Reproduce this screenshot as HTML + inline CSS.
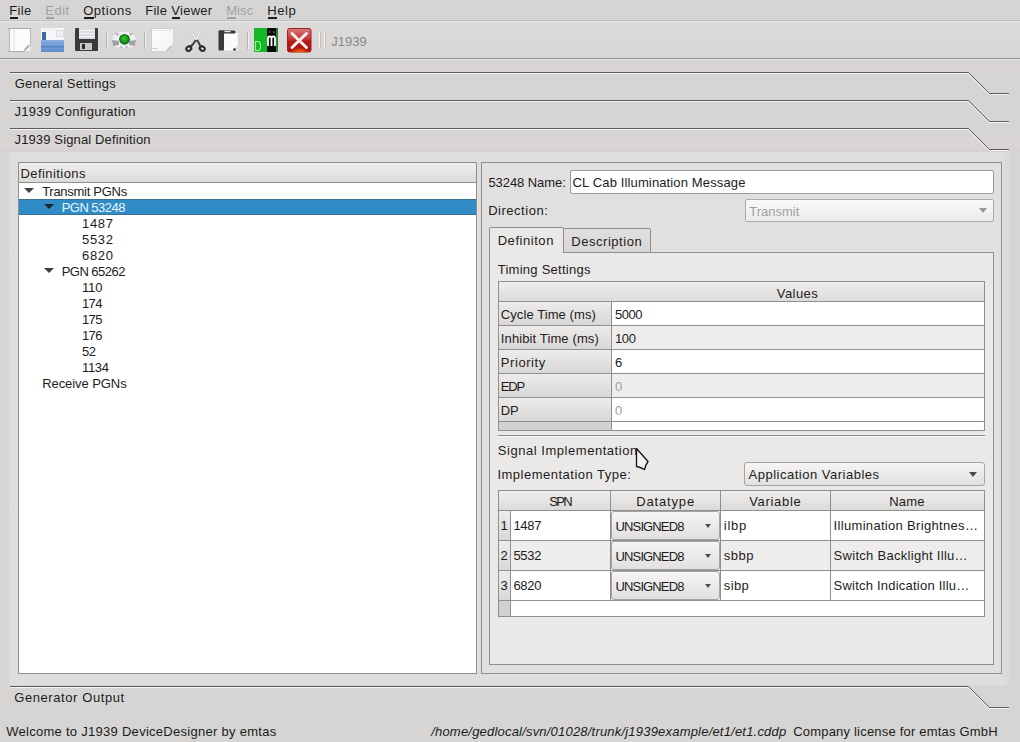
<!DOCTYPE html>
<html><head><meta charset="utf-8">
<style>
*{box-sizing:border-box;margin:0;padding:0}
html,body{width:1020px;height:742px;overflow:hidden;background:#d6d5d3;font-family:"Liberation Sans",sans-serif;font-size:13px;color:#1c1c1c;position:relative}
.a{position:absolute}
.t{position:absolute;white-space:pre;line-height:15px}
.hd{background:linear-gradient(#f0eeec,#dddbd9)}
.vh{background:linear-gradient(#eeecea,#dad8d6)}
.cb{background:linear-gradient(#f6f5f4,#e2e0de);border:1px solid #a6a4a2;border-radius:3px}
.arr{position:absolute;width:0;height:0;border-left:5px solid transparent;border-right:5px solid transparent;border-top:5px solid #3c3c3c}
</style></head><body>
<!-- menu bar -->
<div class="a" style="left:0;top:20px;width:1020px;height:1px;background:#c4c3c1"></div>
<div class="a" style="left:0;top:21px;width:1020px;height:1px;background:#e6e5e4"></div>
<div class="a" style="left:0;top:22px;width:1020px;height:36px;background:linear-gradient(#dcdbda,#d7d6d5)"></div>
<!-- underline accelerators -->
<div class="a" style="left:10px;top:17px;width:8px;height:2px;background:#1c1c1c"></div>
<div class="a" style="left:46px;top:17px;width:8px;height:2px;background:#a3a19f"></div>
<div class="a" style="left:84px;top:17px;width:10px;height:2px;background:#1c1c1c"></div>
<div class="a" style="left:172px;top:17px;width:8px;height:2px;background:#1c1c1c"></div>
<div class="a" style="left:227px;top:17px;width:9px;height:2px;background:#a3a19f"></div>
<div class="a" style="left:268px;top:17px;width:9px;height:2px;background:#1c1c1c"></div>
<!-- toolbar bottom -->
<div class="a" style="left:0;top:58px;width:1020px;height:1px;background:#918f8d"></div>
<div class="a" style="left:0;top:59px;width:1020px;height:1px;background:#e8e7e6"></div>
<div class="a" style="left:0;top:64px;width:1020px;height:8px;background:#d9d5d4"></div>
<div class="a" style="left:0;top:136px;width:1020px;height:12px;background:#d9d5d4"></div>
<div class="a" style="left:0;top:148px;width:1020px;height:4px;background:#d4d3d2"></div>

<!-- toolbox tab lines -->
<svg class="a" style="left:0;top:0" width="1020" height="742">
<g fill="none" stroke-width="1">
<path d="M10 73.5 H968 L989 94.5 H1009" stroke="#f6f4f2"/>
<path d="M10 72.5 H968.5 L989.5 93.5 H1009" stroke="#5e5c5a"/>
<path d="M10 101.5 H968 L989 122.5 H1009" stroke="#f6f4f2"/>
<path d="M10 100.5 H968.5 L989.5 121.5 H1009" stroke="#5e5c5a"/>
<path d="M10 129.5 H968 L989 150.5 H1009" stroke="#f6f4f2"/>
<path d="M10 128.5 H968.5 L989.5 149.5 H1009" stroke="#5e5c5a"/>
<path d="M10 687.5 H968 L989 708.5 H1009" stroke="#f6f4f2"/>
<path d="M10 686.5 H968.5 L989.5 707.5 H1009" stroke="#5e5c5a"/>
</g></svg>

<!-- page -->
<div class="a" style="left:9px;top:152px;width:1001px;height:533px;background:linear-gradient(90deg,#dddcdb 0px,#dfdedd 9px,#dfdedd 993px,#d9d8d7 1001px)"></div>

<!-- left tree -->
<div class="a" style="left:18px;top:162px;width:459px;height:512px;background:#fff;border:1px solid #918f8d"></div>
<div class="a hd" style="left:19px;top:163px;width:457px;height:19px"></div>
<div class="a" style="left:19px;top:182px;width:457px;height:1px;background:#918f8d"></div>
<div class="a" style="left:19px;top:199px;width:457px;height:16px;background:#308cc6;border-top:1px solid #3a7090;border-bottom:1px solid #3a7090"></div>
<div class="arr" style="left:24px;top:188px;border-top-color:#404040"></div>
<div class="arr" style="left:44px;top:204px;border-top-color:#1a2530"></div>
<div class="arr" style="left:44px;top:268px;border-top-color:#404040"></div>

<!-- right panel -->
<div class="a" style="left:481px;top:162px;width:521px;height:512px;background:#e2e0de;border:1px solid #918f8d"></div>
<!-- name input -->
<div class="a" style="left:570px;top:170px;width:424px;height:24px;background:#fff;border:1px solid #9c9a98;border-radius:2px"></div>
<!-- direction combo (disabled) -->
<div class="a" style="left:745px;top:199px;width:249px;height:23px;background:linear-gradient(#fbfafa,#ecebea);border:1px solid #acaaa8;border-radius:2px"></div>
<div class="arr" style="left:979px;top:208px;border-left-width:4px;border-right-width:4px;border-top-width:5px;border-top-color:#9a9896"></div>

<!-- tabs -->
<div class="a" style="left:563px;top:228px;width:88px;height:25px;background:linear-gradient(#e2e0de,#d8d6d4);border:1px solid #918f8d;border-radius:2px 2px 0 0"></div>
<div class="a" style="left:489px;top:252px;width:505px;height:413px;background:#ebe9e7;border:1px solid #918f8d"></div>
<div class="a" style="left:489px;top:227px;width:75px;height:26px;background:#ebe9e7;border:1px solid #918f8d;border-bottom:none;border-radius:2px 2px 0 0"></div>

<!-- table 1 -->
<div class="a" style="left:498px;top:281px;width:487px;height:150px;background:#fff;border:1px solid #918f8d"></div>
<div class="a hd" style="left:499px;top:282px;width:485px;height:19px"></div>
<div class="a" style="left:499px;top:301px;width:485px;height:1px;background:#918f8d"></div>
<div class="a" style="left:612px;top:326px;width:372px;height:23px;background:#efedeb"></div>
<div class="a" style="left:612px;top:374px;width:372px;height:23px;background:#efedeb"></div>
<div class="a vh" style="left:499px;top:302px;width:112px;height:23px"></div>
<div class="a vh" style="left:499px;top:326px;width:112px;height:23px"></div>
<div class="a vh" style="left:499px;top:350px;width:112px;height:23px"></div>
<div class="a vh" style="left:499px;top:374px;width:112px;height:23px"></div>
<div class="a vh" style="left:499px;top:398px;width:112px;height:23px"></div>
<div class="a" style="left:499px;top:422px;width:112px;height:8px;background:#d4d2d0"></div>
<div class="a" style="left:611px;top:302px;width:1px;height:128px;background:#918f8d"></div>
<div class="a" style="left:499px;top:325px;width:485px;height:1px;background:#918f8d"></div>
<div class="a" style="left:499px;top:349px;width:485px;height:1px;background:#918f8d"></div>
<div class="a" style="left:499px;top:373px;width:485px;height:1px;background:#918f8d"></div>
<div class="a" style="left:499px;top:397px;width:485px;height:1px;background:#918f8d"></div>
<div class="a" style="left:499px;top:421px;width:485px;height:1px;background:#918f8d"></div>

<!-- separator -->
<div class="a" style="left:498px;top:435px;width:487px;height:1px;background:#8e8c8a"></div>
<div class="a" style="left:498px;top:436px;width:487px;height:1px;background:#fbfaf9"></div>

<!-- app variables combo -->
<div class="a cb" style="left:744px;top:462px;width:241px;height:24px"></div>
<div class="arr" style="left:969px;top:472px;border-left-width:4.5px;border-right-width:4.5px;border-top-color:#4a4a4a"></div>

<!-- table 2 -->
<div class="a" style="left:498px;top:490px;width:487px;height:127px;background:#fff;border:1px solid #918f8d"></div>
<div class="a hd" style="left:499px;top:491px;width:485px;height:19px"></div>
<div class="a" style="left:499px;top:510px;width:485px;height:1px;background:#918f8d"></div>
<div class="a" style="left:511px;top:541px;width:473px;height:29px;background:#efedeb"></div>
<div class="a vh" style="left:499px;top:511px;width:11px;height:29px"></div>
<div class="a vh" style="left:499px;top:541px;width:11px;height:29px"></div>
<div class="a vh" style="left:499px;top:571px;width:11px;height:29px"></div>
<div class="a" style="left:499px;top:601px;width:11px;height:15px;background:#d4d2d0"></div>
<div class="a" style="left:510px;top:511px;width:1px;height:105px;background:#918f8d"></div>
<div class="a" style="left:610px;top:491px;width:1px;height:110px;background:#918f8d"></div>
<div class="a" style="left:720px;top:491px;width:1px;height:110px;background:#918f8d"></div>
<div class="a" style="left:830px;top:491px;width:1px;height:110px;background:#918f8d"></div>
<div class="a" style="left:499px;top:540px;width:485px;height:1px;background:#918f8d"></div>
<div class="a" style="left:499px;top:570px;width:485px;height:1px;background:#918f8d"></div>
<div class="a" style="left:499px;top:600px;width:485px;height:1px;background:#918f8d"></div>
<!-- datatype combos -->
<div class="a cb" style="left:611px;top:511px;width:109px;height:29px"></div>
<div class="a cb" style="left:611px;top:541px;width:109px;height:29px"></div>
<div class="a cb" style="left:611px;top:571px;width:109px;height:29px"></div>
<div class="arr" style="left:705px;top:524px;border-left-width:3.5px;border-right-width:3.5px;border-top-width:4px;border-top-color:#4e4e4e"></div>
<div class="arr" style="left:705px;top:554px;border-left-width:3.5px;border-right-width:3.5px;border-top-width:4px;border-top-color:#4e4e4e"></div>
<div class="arr" style="left:705px;top:584px;border-left-width:3.5px;border-right-width:3.5px;border-top-width:4px;border-top-color:#4e4e4e"></div>

<svg class="a" style="left:630px;top:444px" width="24" height="30">
<path d="M6.5 4.5 L6.5 22.5 Q10 23 14.5 25.5 Q15.5 21 18 17.5 Z" fill="#f2f2f2" stroke="#111" stroke-width="1.3" stroke-linejoin="round"/>
</svg>
<!-- icons -->
<svg class="a" style="left:0;top:20px" width="380" height="38">
<defs>
<linearGradient id="pg" x1="0" y1="0" x2="1" y2="1"><stop offset="0" stop-color="#ffffff"/><stop offset="1" stop-color="#f0f0f2"/></linearGradient>
<linearGradient id="rx" x1="0" y1="0" x2="0" y2="1"><stop offset="0" stop-color="#d87a7a"/><stop offset="0.45" stop-color="#c43434"/><stop offset="0.55" stop-color="#b81818"/><stop offset="1" stop-color="#a81010"/></linearGradient>
<radialGradient id="ro" cx="0.5" cy="1" r="0.45"><stop offset="0" stop-color="#ff6a00"/><stop offset="1" stop-color="#ff6a00" stop-opacity="0"/></radialGradient>
<radialGradient id="gr" cx="0.45" cy="0.4" r="0.6"><stop offset="0" stop-color="#2ed02e"/><stop offset="1" stop-color="#0c7a12"/></radialGradient>
<linearGradient id="bl" x1="0" y1="0" x2="0" y2="1"><stop offset="0" stop-color="#86aee0"/><stop offset="0.5" stop-color="#6f9ad4"/><stop offset="0.55" stop-color="#4f7fc2"/><stop offset="0.7" stop-color="#6e9ad6"/><stop offset="1" stop-color="#5a88c8"/></linearGradient>
</defs>
<g transform="translate(0,-20)">
<!-- new document: x 9-31, y 28-51 -->
<rect x="9" y="28" width="22" height="24" fill="#fbfbfc"/>
<rect x="13" y="30" width="2" height="20" fill="#eef0f8"/>
<rect x="8" y="28" width="23" height="1" fill="#a9a9a9"/>
<rect x="9" y="29" width="1" height="22" fill="#b8b8b8"/>
<rect x="30" y="29" width="1" height="16" fill="#b8b8b8"/>
<rect x="8" y="51" width="16" height="1" fill="#a9a9a9"/>
<path d="M23 52 L31 44 L31 52 Z" fill="#d9d8d7"/>
<path d="M23.5 51.5 Q25 46 30.5 44.5 Q28 48 24.5 51.5Z" fill="#a8a8a8"/>
<path d="M25 51 Q27.5 48 30.5 46.5 L30.5 51 Z" fill="#f2f2f2"/>

<!-- open: x 41-64, y 28-52 -->
<rect x="41" y="28" width="23" height="12" fill="#f4f6f8"/>
<rect x="43" y="29" width="11" height="1" fill="#e8eaee"/>
<rect x="56" y="30" width="8" height="7" fill="#dcdfe4"/>
<path d="M57 31 L63 31 L63 36 L57 36Z" fill="#eef0f3"/>
<rect x="42" y="32" width="4" height="8" fill="#3f6aa6"/>
<rect x="41" y="40" width="23" height="12" fill="url(#bl)"/>

<!-- save: x 75-98, y 28-51 -->
<rect x="75" y="28" width="23" height="23" rx="1" fill="#3a3a3a"/>
<rect x="79" y="28" width="16" height="11" fill="#dadcdf"/>
<rect x="79" y="30" width="16" height="1" fill="#f2f3f5"/>
<rect x="79" y="33" width="16" height="1" fill="#f2f3f5"/>
<rect x="79" y="36" width="16" height="1" fill="#f2f3f5"/>
<rect x="80" y="43" width="12" height="7" fill="#c8c8c8"/>
<rect x="82" y="44" width="3" height="5" fill="#2a2a2a"/>

<!-- separator -->
<rect x="106" y="32" width="1" height="17" fill="#b4b2b0"/>
<rect x="107" y="32" width="1" height="17" fill="#f2f0ee"/>

<!-- gear with green led -->
<path d="M113 36 Q116 33 120 32 L128 32 Q133 33 135 36 L136 44 Q133 47 128 48 L120 48 Q115 47 112 44 Z" fill="#f0f0f2"/>
<path d="M112 40 L119 41 L119 45 L113 46Z M136 40 L129 41 L129 45 L135 46Z" fill="#a0a0a6"/>
<path d="M114 33 L118.5 33 L118.5 36.5 Z M134 33 L129.5 33 L129.5 36.5Z" fill="#b8b8bc"/>
<path d="M119 48 L121.5 45 L123 48Z M129 48 L126.5 45 L125 48Z" fill="#c4c4c8"/>
<circle cx="124.5" cy="39.3" r="5.4" fill="#0e6e14"/>
<circle cx="124.5" cy="39.5" r="4.4" fill="url(#gr)"/>
<rect x="144" y="32" width="1" height="17" fill="#b4b2b0"/>
<rect x="145" y="32" width="1" height="17" fill="#f2f0ee"/>

<!-- copy doc: x 151-174, y 28-52 -->
<rect x="151.5" y="28.5" width="22" height="23" fill="url(#pg)" stroke="#d0d0d0"/>
<rect x="152" y="30" width="20" height="1" fill="#e2e4ea"/>
<rect x="152" y="48" width="6" height="1" fill="#c8d2e0"/>
<path d="M166 51 Q168 46 174 44 L174 51Z" fill="#d8d6d4"/>
<path d="M166 51 Q169 47 174 45 Q170 48 167 51Z" fill="#b8b8b8"/>

<!-- scissors: x 185-206, y 31-51 -->
<path d="M192.5 34 L196 39.5 M199.5 32 L196.5 39.5" stroke="#b8b8b8" stroke-width="2.2" fill="none" stroke-linecap="round"/>
<path d="M192.5 34 L196 39.5 M199.5 32 L196.5 39.5" stroke="#fafafa" stroke-width="1.2" fill="none" stroke-linecap="round"/>
<path d="M196 40 Q194 43 191 46.5 M197 40 Q199 43 200.5 46.5" stroke="#3a3a3a" stroke-width="2" fill="none"/>
<ellipse cx="188.8" cy="48.6" rx="2.6" ry="2" transform="rotate(-35 188.8 48.6)" fill="none" stroke="#303030" stroke-width="2.2"/>
<ellipse cx="202.2" cy="48.6" rx="2.6" ry="2" transform="rotate(35 202.2 48.6)" fill="none" stroke="#303030" stroke-width="2.2"/>
<rect x="188" y="48" width="1.4" height="1.4" fill="#f4f4f4"/>
<rect x="202" y="48" width="1.4" height="1.4" fill="#f4f4f4"/>

<!-- paste: x 218-239, y 30-51 -->
<rect x="223.5" y="33" width="15" height="17.5" fill="#fafafa"/>
<rect x="238" y="34" width="1" height="12" fill="#d0d0d0"/>
<path d="M231 50.5 Q236 48 238.5 45 L238.5 50.5Z" fill="#dcdcdc"/>
<rect x="218.5" y="30.5" width="5.5" height="20" rx="1" fill="#383838"/>
<rect x="218.5" y="30.5" width="17" height="3" rx="1.5" fill="#383838"/>
<rect x="224.5" y="31" width="6" height="1.2" fill="#e8e8e8"/>
<circle cx="234.5" cy="49.5" r="1.2" fill="#2a2a2a"/>

<rect x="247" y="32" width="1" height="17" fill="#b4b2b0"/>
<rect x="248" y="32" width="1" height="17" fill="#f2f0ee"/>

<!-- DM: x 254-278, y 28-52 -->
<rect x="254" y="28" width="24" height="24" fill="#14b824"/>
<rect x="267" y="28" width="9" height="24" fill="#0a0a0a"/>
<rect x="276" y="28" width="2" height="24" fill="#1f8a2a"/>
<path d="M268 46 V38 Q268 36.5 270 36.5 Q271.5 36.5 271.5 38 V46 M271.5 38 Q271.5 36.5 273.5 36.5 Q275 36.5 275 38 V46" stroke="#ffffff" stroke-width="1.8" fill="none"/>
<rect x="269" y="31" width="1.5" height="2" fill="#555"/><rect x="273" y="31" width="1.5" height="2" fill="#555"/>
<path d="M255.5 41.5 H258 Q260.5 41.5 260.5 46 Q260.5 50.5 258 50.5 H255.5 Z" fill="none" stroke="#9cf59c" stroke-width="1.2"/>

<!-- red X: x 287-311, y 28-52 -->
<rect x="287.5" y="28.5" width="23.5" height="23.5" rx="2" fill="url(#rx)" stroke="#a02020" stroke-width="1"/>
<rect x="288" y="42" width="23" height="10" rx="2" fill="url(#ro)"/>
<path d="M292 33.5 L306.5 47.5 M306.5 33.5 L292 47.5" stroke="#fbeeee" stroke-width="3" stroke-linecap="round"/>

<rect x="319" y="32" width="1" height="16" fill="#f4f2f0"/>
<rect x="320" y="32" width="1" height="16" fill="#c4c2c0"/>
<rect x="324" y="32" width="1" height="16" fill="#f4f2f0"/>
<rect x="325" y="32" width="1" height="16" fill="#c4c2c0"/>
</g>
</svg>
<div class="t" style="left:9.2px;top:3px;letter-spacing:0.349px;">File</div>
<div class="t" style="left:45.2px;top:3px;letter-spacing:0.531px;color:#a3a19f">Edit</div>
<div class="t" style="left:83.2px;top:3px;letter-spacing:0.531px;">Options</div>
<div class="t" style="left:145.2px;top:3px;letter-spacing:0.294px;">File Viewer</div>
<div class="t" style="left:226.2px;top:3px;letter-spacing:0.094px;color:#a3a19f">Misc</div>
<div class="t" style="left:267.2px;top:3px;letter-spacing:0.617px;">Help</div>
<div class="t" style="left:331.2px;top:34px;letter-spacing:0.045px;color:#8a8886">J1939</div>
<div class="t" style="left:14.7px;top:76px;letter-spacing:0.277px;">General Settings</div>
<div class="t" style="left:14.5px;top:104px;letter-spacing:0.258px;">J1939 Configuration</div>
<div class="t" style="left:14.5px;top:132px;letter-spacing:0.137px;">J1939 Signal Definition</div>
<div class="t" style="left:14.2px;top:690px;letter-spacing:0.589px;">Generator Output</div>
<div class="t" style="left:6.2px;top:724px;letter-spacing:0.278px;">Welcome to J1939 DeviceDesigner by emtas</div>
<div class="t" style="left:431.2px;top:724px;letter-spacing:0.200px;font-style:italic">/home/gedlocal/svn/01028/trunk/j1939example/et1/et1.cddp</div>
<div class="t" style="left:793.2px;top:724px;letter-spacing:0.200px;">Company license for emtas GmbH</div>
<div class="t" style="left:20.5px;top:166px;letter-spacing:0.430px;">Definitions</div>
<div class="t" style="left:42.2px;top:184px;letter-spacing:-0.280px;">Transmit PGNs</div>
<div class="t" style="left:61.7px;top:200px;letter-spacing:-0.530px;color:#e6f6ff">PGN 53248</div>
<div class="t" style="left:82.0px;top:216px;letter-spacing:0.693px;">1487</div>
<div class="t" style="left:82.0px;top:232px;letter-spacing:0.693px;">5532</div>
<div class="t" style="left:82.0px;top:248px;letter-spacing:0.693px;">6820</div>
<div class="t" style="left:61.7px;top:264px;letter-spacing:-0.530px;">PGN 65262</div>
<div class="t" style="left:82.0px;top:280px;letter-spacing:-0.167px;">110</div>
<div class="t" style="left:82.0px;top:296px;letter-spacing:-0.652px;">174</div>
<div class="t" style="left:82.0px;top:312px;letter-spacing:-0.652px;">175</div>
<div class="t" style="left:82.0px;top:328px;letter-spacing:-0.652px;">176</div>
<div class="t" style="left:82.0px;top:344px;letter-spacing:-0.469px;">52</div>
<div class="t" style="left:82.0px;top:360px;letter-spacing:-0.323px;">1134</div>
<div class="t" style="left:42.2px;top:376px;letter-spacing:-0.068px;">Receive PGNs</div>
<div class="t" style="left:488.4px;top:175px;letter-spacing:-0.066px;">53248 Name:</div>
<div class="t" style="left:572.6px;top:175px;letter-spacing:0.134px;">CL Cab Illumination Message</div>
<div class="t" style="left:488.2px;top:203px;letter-spacing:0.520px;">Direction:</div>
<div class="t" style="left:749.2px;top:204px;color:#a09e9c">Transmit</div>
<div class="t" style="left:497.7px;top:233px;letter-spacing:0.548px;">Definiton</div>
<div class="t" style="left:571.3px;top:234px;letter-spacing:0.537px;">Description</div>
<div class="t" style="left:497.7px;top:262px;letter-spacing:0.264px;">Timing Settings</div>
<div class="t" style="left:776.8px;top:286px;letter-spacing:0.441px;">Values</div>
<div class="t" style="left:500.8px;top:307px;letter-spacing:0.079px;">Cycle Time (ms)</div>
<div class="t" style="left:614.9px;top:307px;letter-spacing:-0.441px;">5000</div>
<div class="t" style="left:500.8px;top:331px;letter-spacing:0.120px;">Inhibit Time (ms)</div>
<div class="t" style="left:614.9px;top:331px;letter-spacing:-0.352px;">100</div>
<div class="t" style="left:500.8px;top:355px;letter-spacing:0.564px;">Priority</div>
<div class="t" style="left:614.9px;top:355px;">6</div>
<div class="t" style="left:500.8px;top:379px;letter-spacing:-1.217px;">EDP</div>
<div class="t" style="left:614.9px;top:379px;color:#a0a0a0">0</div>
<div class="t" style="left:500.8px;top:403px;letter-spacing:-0.262px;">DP</div>
<div class="t" style="left:614.9px;top:403px;color:#a0a0a0">0</div>
<div class="t" style="left:497.8px;top:443px;letter-spacing:0.538px;">Signal Implementation</div>
<div class="t" style="left:497.4px;top:467px;letter-spacing:0.497px;">Implementation Type:</div>
<div class="t" style="left:748.5px;top:467px;letter-spacing:0.507px;">Application Variables</div>
<div class="t" style="left:549.2px;top:494px;letter-spacing:-1.667px;">SPN</div>
<div class="t" style="left:636.2px;top:494px;letter-spacing:0.850px;">Datatype</div>
<div class="t" style="left:749.2px;top:494px;letter-spacing:0.695px;">Variable</div>
<div class="t" style="left:889.2px;top:494px;letter-spacing:0.237px;">Name</div>
<div class="t" style="left:500.5px;top:518px;">1</div>
<div class="t" style="left:513.4px;top:518px;letter-spacing:-0.307px;">1487</div>
<div class="t" style="left:615.6px;top:519px;letter-spacing:-0.882px;">UNSIGNED8</div>
<div class="t" style="left:723.8px;top:518px;letter-spacing:0.717px;">ilbp</div>
<div class="t" style="left:833.6px;top:518px;letter-spacing:0.318px;">Illumination Brightnes…</div>
<div class="t" style="left:500.5px;top:548px;">2</div>
<div class="t" style="left:513.4px;top:548px;letter-spacing:-0.307px;">5532</div>
<div class="t" style="left:615.6px;top:549px;letter-spacing:-0.882px;">UNSIGNED8</div>
<div class="t" style="left:723.8px;top:548px;letter-spacing:0.532px;">sbbp</div>
<div class="t" style="left:833.6px;top:548px;letter-spacing:0.291px;">Switch Backlight Illu…</div>
<div class="t" style="left:500.5px;top:578px;">3</div>
<div class="t" style="left:513.4px;top:578px;letter-spacing:-0.307px;">6820</div>
<div class="t" style="left:615.6px;top:579px;letter-spacing:-0.882px;">UNSIGNED8</div>
<div class="t" style="left:723.8px;top:578px;letter-spacing:0.380px;">sibp</div>
<div class="t" style="left:833.6px;top:578px;letter-spacing:0.219px;">Switch Indication Illu…</div>
</body></html>
